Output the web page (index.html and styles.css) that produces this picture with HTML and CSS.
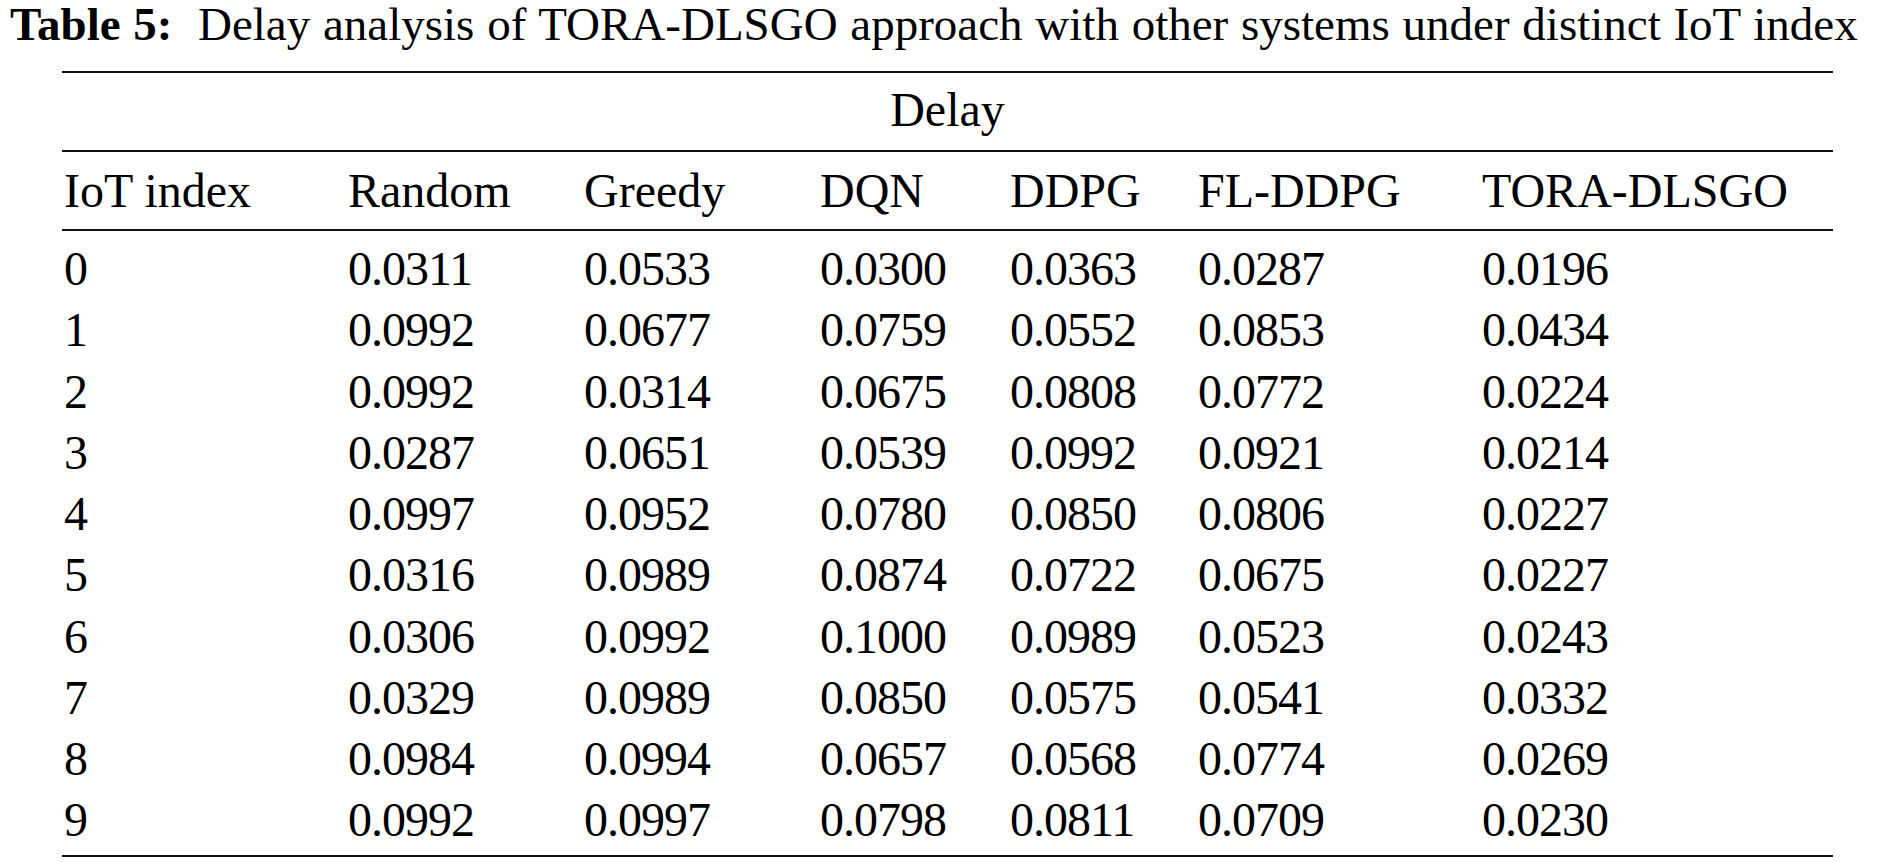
FILE: index.html
```html
<!DOCTYPE html>
<html lang="en">
<head>
<meta charset="utf-8">
<title>Table 5</title>
<link rel="stylesheet" href="styles.css">
</head>
<body>
<p class="caption"><span class="label">Table 5:</span>&nbsp; Delay analysis of TORA-DLSGO approach with other systems under distinct IoT index</p>
<table class="data">
  <colgroup>
    <col class="c1"><col class="c2"><col class="c3"><col class="c4"><col class="c5"><col class="c6"><col class="c7">
  </colgroup>
  <thead>
    <tr class="group"><th colspan="7">Delay</th></tr>
    <tr class="cols">
      <th>IoT index</th><th>Random</th><th>Greedy</th><th>DQN</th><th>DDPG</th><th>FL-DDPG</th><th>TORA-DLSGO</th>
    </tr>
  </thead>
  <tbody>
    <tr class="first"><td>0</td><td>0.0311</td><td>0.0533</td><td>0.0300</td><td>0.0363</td><td>0.0287</td><td>0.0196</td></tr>
    <tr><td>1</td><td>0.0992</td><td>0.0677</td><td>0.0759</td><td>0.0552</td><td>0.0853</td><td>0.0434</td></tr>
    <tr><td>2</td><td>0.0992</td><td>0.0314</td><td>0.0675</td><td>0.0808</td><td>0.0772</td><td>0.0224</td></tr>
    <tr><td>3</td><td>0.0287</td><td>0.0651</td><td>0.0539</td><td>0.0992</td><td>0.0921</td><td>0.0214</td></tr>
    <tr><td>4</td><td>0.0997</td><td>0.0952</td><td>0.0780</td><td>0.0850</td><td>0.0806</td><td>0.0227</td></tr>
    <tr><td>5</td><td>0.0316</td><td>0.0989</td><td>0.0874</td><td>0.0722</td><td>0.0675</td><td>0.0227</td></tr>
    <tr><td>6</td><td>0.0306</td><td>0.0992</td><td>0.1000</td><td>0.0989</td><td>0.0523</td><td>0.0243</td></tr>
    <tr><td>7</td><td>0.0329</td><td>0.0989</td><td>0.0850</td><td>0.0575</td><td>0.0541</td><td>0.0332</td></tr>
    <tr><td>8</td><td>0.0984</td><td>0.0994</td><td>0.0657</td><td>0.0568</td><td>0.0774</td><td>0.0269</td></tr>
    <tr class="last"><td>9</td><td>0.0992</td><td>0.0997</td><td>0.0798</td><td>0.0811</td><td>0.0709</td><td>0.0230</td></tr>
  </tbody>
</table>
</body>
</html>
```
FILE: styles.css
```css
html, body {
  margin: 0;
  padding: 0;
  background: #ffffff;
}

body {
  font-family: "Liberation Serif", "Times New Roman", serif;
  color: #000000;
  font-size: 48px;
}

.caption {
  margin: 0;
  padding: 1px 0 0 10px;
  font-size: 47px;
  line-height: 47px;
  word-spacing: 1px;
  white-space: nowrap;
}

.caption .label {
  font-weight: bold;
}

.data {
  margin-top: 23px;
  margin-left: 62px;
  width: 1771px;
  table-layout: fixed;
  border-collapse: collapse;
  border-top: 2px solid #111;
  border-bottom: 2px solid #111;
  font-size: 48px;
  line-height: 61px;
}

.c1 { width: 284px; }
.c2 { width: 236px; }
.c3 { width: 236px; }
.c4 { width: 190px; }
.c5 { width: 188px; }
.c6 { width: 284px; }
.c7 { width: auto; }

.data th,
.data td {
  font-weight: normal;
  text-align: left;
  padding: 0 0 0 2px;
  white-space: nowrap;
}

.data .group th {
  text-align: center;
  padding: 6px 0 10px 0;
  border-bottom: 2px solid #111;
}

.data .cols th {
  padding-top: 8px;
  padding-bottom: 8px;
  border-bottom: 2px solid #111;
}

.data tbody td {
  line-height: 61.27px;
  letter-spacing: -1px;
}

.data .first td {
  padding-top: 7px;
}

.data .last td {
  padding-bottom: 4px;
}
```
